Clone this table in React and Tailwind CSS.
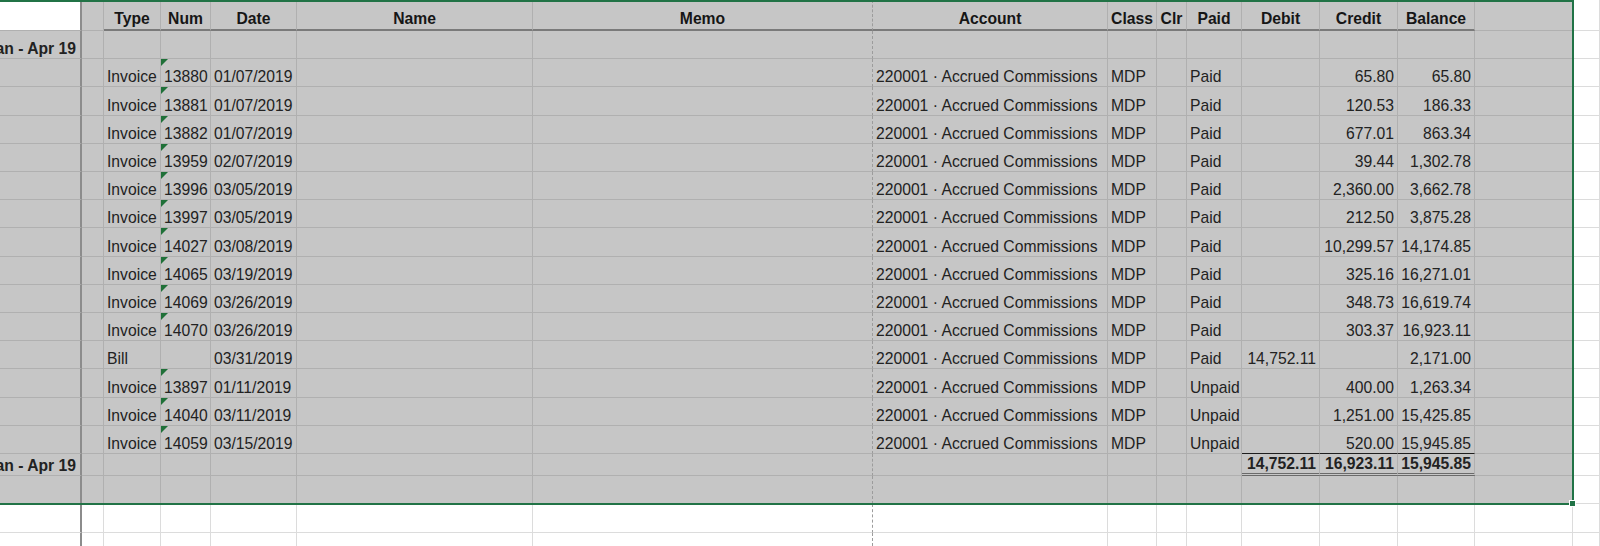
import React from "react";

const COLS =
  "grid grid-cols-[82px_22px_57px_50px_86px_236px_340px_235px_49px_30px_55px_78px_78px_77px_98px_27px]";

const HEADERS = ["", "", "Type", "Num", "Date", "Name", "Memo", "Account", "Class", "Clr", "Paid", "Debit", "Credit", "Balance", "", ""];

const rows = [
  ["Invoice", "13880", "01/07/2019", "Paid", "", "65.80", "65.80"],
  ["Invoice", "13881", "01/07/2019", "Paid", "", "120.53", "186.33"],
  ["Invoice", "13882", "01/07/2019", "Paid", "", "677.01", "863.34"],
  ["Invoice", "13959", "02/07/2019", "Paid", "", "39.44", "1,302.78"],
  ["Invoice", "13996", "03/05/2019", "Paid", "", "2,360.00", "3,662.78"],
  ["Invoice", "13997", "03/05/2019", "Paid", "", "212.50", "3,875.28"],
  ["Invoice", "14027", "03/08/2019", "Paid", "", "10,299.57", "14,174.85"],
  ["Invoice", "14065", "03/19/2019", "Paid", "", "325.16", "16,271.01"],
  ["Invoice", "14069", "03/26/2019", "Paid", "", "348.73", "16,619.74"],
  ["Invoice", "14070", "03/26/2019", "Paid", "", "303.37", "16,923.11"],
  ["Bill", "", "03/31/2019", "Paid", "14,752.11", "", "2,171.00"],
  ["Invoice", "13897", "01/11/2019", "Unpaid", "", "400.00", "1,263.34"],
  ["Invoice", "14040", "03/11/2019", "Unpaid", "", "1,251.00", "15,425.85"],
  ["Invoice", "14059", "03/15/2019", "Unpaid", "", "520.00", "15,945.85"],
];

// borders + background for one cell
function cellCls(i, o) {
  const sel = o.sel && i < 15;
  let c = "flex items-end overflow-hidden whitespace-nowrap ";
  c += o.header ? "pb-[1px] " : "pb-0 ";
  c += sel && !o.active ? "bg-[#c6c6c6] " : "bg-white ";
  if (i === 0) c += "border-r-2 border-r-[#8c8c8c] ";
  else if (i === 6) c += "border-r border-r-[#9c9c9c] [border-right-style:dashed] ";
  else c += sel ? "border-r border-r-[#b0b0b0] " : "border-r border-r-[#dcdcdc] ";

  if (o.header && i >= 2 && i <= 13) c += "border-b-2 border-b-[#7a7a7a] ";
  else if (o.lastData && i >= 11 && i <= 13) c += "border-b border-b-[#1e1e1e] ";
  else if (o.total && i >= 11 && i <= 13) c += "border-b-[3px] border-b-[#6a6a6a] [border-bottom-style:double] ";
  else c += sel ? "border-b border-b-[#b0b0b0] " : "border-b border-b-[#dcdcdc] ";
  return c;
}

function Row({ h, cells = [], opts = {}, align = [] }) {
  return (
    <div className={`${COLS} ${h}`}>
      {Array.from({ length: 16 }).map((_, i) => {
        const v = cells[i];
        const a = align[i] || "start";
        const just =
          a === "end" ? "justify-end pr-[3px]" : a === "center" ? "justify-center" : "justify-start pl-[3px]";
        return (
          <div key={i} className={`${cellCls(i, { ...opts, active: opts.activeFirst && i === 0 })} ${just} relative`}>
            {opts.flag && i === 3 && v ? (
              <span className="absolute left-0 top-0 h-0 w-0 border-t-[7px] border-r-[7px] border-t-[#1f7038] border-r-transparent" />
            ) : null}
            {v}
          </div>
        );
      })}
    </div>
  );
}

const dataAlign = [];
dataAlign[0] = "end";
dataAlign[11] = "end";
dataAlign[12] = "end";
dataAlign[13] = "end";

export default function App() {
  return (
    <div className="relative h-[546px] w-[1600px] overflow-hidden bg-white font-['Liberation_Sans',Arial,sans-serif] text-[15.7px] leading-[18px] text-[#222]">
      <Row
        h="h-[31px]"
        cells={HEADERS.map((t) => (t ? <span className="font-bold text-[#161616]">{t}</span> : ""))}
        align={HEADERS.map(() => "center")}
        opts={{ sel: true, header: true, activeFirst: true }}
      />
      <Row h="h-[28.3px]" cells={[<b className="pr-[1px]">Jan - Apr 19</b>]} align={dataAlign} opts={{ sel: true }} />
      {rows.map((r, k) => (
        <Row
          key={k}
          h="h-[28.2px]"
          cells={["", "", r[0], r[1], r[2], "", "", "220001 · Accrued Commissions", "MDP", "", r[3], r[4], r[5], r[6]]}
          align={dataAlign}
          opts={{ sel: true, flag: r[0] === "Invoice", lastData: k === rows.length - 1 }}
        />
      ))}
      <Row
        h="h-[22px]"
        cells={[
          <b className="pr-[1px]">Jan - Apr 19</b>, "", "", "", "", "", "", "", "", "", "",
          <b>14,752.11</b>, <b>16,923.11</b>, <b>15,945.85</b>,
        ]}
        align={dataAlign}
        opts={{ sel: true, total: true }}
      />
      <Row h="h-[28px]" opts={{ sel: true }} />
      <Row h="h-[29px]" />
      <Row h="h-[28px]" />

      {/* selection outline + fill handle */}
      <div className="pointer-events-none absolute -left-1 top-0 h-[505px] w-[1578px] border-2 border-[#217346]" />
      <div className="pointer-events-none absolute left-[1569px] top-[500px] h-[7px] w-[7px] border border-white bg-[#217346]" />
    </div>
  );
}
